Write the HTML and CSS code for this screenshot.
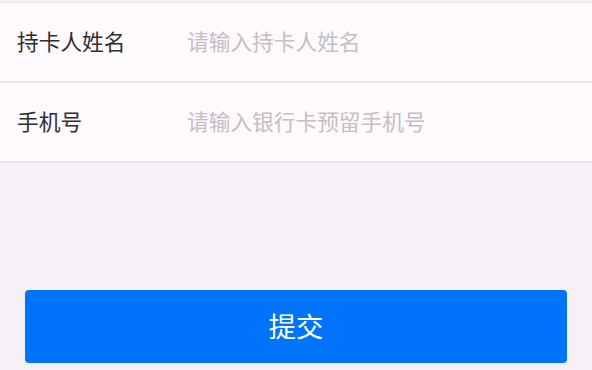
FILE: index.html
```html
<!DOCTYPE html>
<html lang="zh">
<head>
<meta charset="utf-8">
<link rel="stylesheet" href="styles.css">
</head>
<body>
<div class="page">
  <div class="form">
    <div class="row">
      <span class="label">持卡人姓名</span>
      <span class="placeholder">请输入持卡人姓名</span>
    </div>
    <div class="row">
      <span class="label">手机号</span>
      <span class="placeholder">请输入银行卡预留手机号</span>
    </div>
  </div>
  <div class="actions">
    <button class="submit">提交</button>
  </div>
</div>
</body>
</html>
```
FILE: styles.css
```css
html, body {
  margin: 0;
  padding: 0;
  background: #f6f1f6;
  font-family: "Noto Sans CJK SC", "Noto Sans", sans-serif;
}
.page {
  width: 592px;
  height: 370px;
  overflow: hidden;
  padding-top: 2px;
  box-sizing: border-box;
}
.form {
  background: #fdf9fd;
  border-top: 1px solid #ebe6eb;
  border-bottom: 2px solid #ebe4eb;
}
.row {
  display: flex;
  align-items: center;
  height: 78px;
  padding-left: 17px;
  padding-bottom: 4px;
  box-sizing: border-box;
}
.row + .row {
  border-top: 2px solid #ece7ec;
  height: 80px;
}
.label {
  width: 170px;
  font-size: 21.7px;
  color: #2f2d2f;
}
.placeholder {
  font-size: 21.7px;
  color: #c3bfc3;
}
.actions {
  padding: 127px 25px 0 25px;
}
.submit {
  display: block;
  width: 100%;
  height: 73px;
  border: none;
  border-radius: 4px;
  background: #0073fb;
  color: #ffffff;
  font-family: "Noto Sans CJK SC", "Noto Sans", sans-serif;
  font-size: 27.5px;
  padding: 0 0 4px 0;
}
```
